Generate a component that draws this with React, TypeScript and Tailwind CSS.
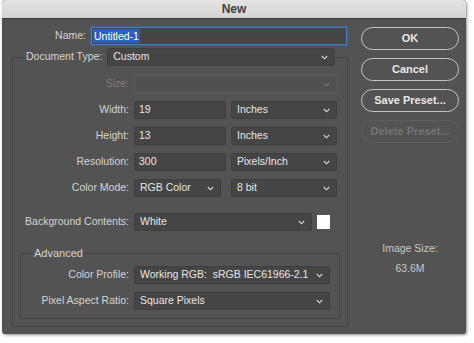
import React from 'react'

function Chevron({dim}: {dim?: boolean}) {
    return (
        <svg width="7" height="5" viewBox="0 0 7 5" className="shrink-0">
            <polyline points="0.8,1 3.5,3.8 6.2,1" fill="none" stroke={dim ? '#777777' : '#d8d8d8'} strokeWidth="1.1" />
        </svg>
    )
}

function Select({value, w, disabled}: {value: string; w: string; disabled?: boolean}) {
    return (
        <div className={`${w} h-[18px] flex items-center justify-between pl-[5px] pr-[6px] rounded-[2px] border ${disabled ? 'border-[#5c5c5c] bg-[#505050]' : 'border-[#3f3f3f] bg-[#454545]'}`}>
            <span className="text-[#e6e6e6] truncate whitespace-pre">{value}</span>
            <Chevron dim={disabled} />
        </div>
    )
}

function Input({value, w}: {value: string; w: string}) {
    return (
        <div className={`${w} h-[18px] flex items-center pl-[4px] rounded-[2px] border border-[#3f3f3f] bg-[#454545] text-[#e6e6e6]`}>
            {value}
        </div>
    )
}

function Button({label, disabled}: {label: string; disabled?: boolean}) {
    return (
        <div className={`w-[98px] h-[23px] rounded-full border flex items-center justify-center text-[11px] font-semibold ${disabled ? 'border-[#5e5e5e] text-[#757575]' : 'border-[#c4c4c4] text-[#e8e8e8]'}`}>
            {label}
        </div>
    )
}

function Row({label, labelW, children, dim}: {label: string; labelW: string; children: React.ReactNode; dim?: boolean}) {
    return (
        <div className="flex items-center gap-[5px] h-[18px]">
            <div className={`${labelW} text-right ${dim ? 'text-[#7c7c7c]' : 'text-[#d4d4d4]'}`}>{label}</div>
            {children}
        </div>
    )
}

export default function App() {
    return (
        <div className="w-[474px] h-[343px] bg-white text-[10.5px]" style={{fontFamily: '"Liberation Sans", Arial, sans-serif'}}>
            <div className="ml-[2px] w-[464px] h-[334px] bg-[#535353] rounded-t-[4px] rounded-b-[3px] overflow-hidden shadow-[1px_1px_3px_rgba(0,0,0,0.45)]">
                <div className="h-[19px] bg-gradient-to-b from-[#e4e4e4] to-[#d4d4d4] border-b border-[#3a3a3a] flex items-center justify-center">
                    <span className="text-[12px] font-bold text-[#404040]">New</span>
                </div>
                <div className="flex">
                    <div className="w-[348px] pt-[8px]">
                        <div className="flex items-center gap-[5px] h-[18px]">
                            <div className="w-[84px] text-right text-[#d4d4d4]">Name:</div>
                            <div className="w-[256px] h-[18px] flex items-center pl-[1px] border border-[#4a7fc4] shadow-[0_0_0_1px_#3a5f8f] bg-[#454545]">
                                <span className="bg-[#2a5fc0] text-white px-[1px] leading-[14px]">Untitled-1</span>
                            </div>
                        </div>
                        <div className="mt-[12px] ml-[10px] w-[336px] border border-[#454545] pb-[7px]">
                            <div className="-mt-[10px] ml-[11px] flex items-center h-[18px]">
                                <div className="bg-[#535353] pl-[2px] pr-[5px] text-[#d4d4d4]">Document Type:</div>
                                <Select value="Custom" w="w-[228px]" />
                            </div>
                            <div className="mt-[9px] flex flex-col gap-[8px]">
                                <Row label="Size:" labelW="w-[116px]" dim>
                                    <Select value="" w="w-[203px]" disabled />
                                </Row>
                                <Row label="Width:" labelW="w-[116px]">
                                    <Input value="19" w="w-[92px]" />
                                    <Select value="Inches" w="w-[106px]" />
                                </Row>
                                <Row label="Height:" labelW="w-[116px]">
                                    <Input value="13" w="w-[92px]" />
                                    <Select value="Inches" w="w-[106px]" />
                                </Row>
                                <Row label="Resolution:" labelW="w-[116px]">
                                    <Input value="300" w="w-[92px]" />
                                    <Select value="Pixels/Inch" w="w-[106px]" />
                                </Row>
                                <Row label="Color Mode:" labelW="w-[116px]">
                                    <Select value="RGB Color" w="w-[87px]" />
                                    <div className="w-0" />
                                    <Select value="8 bit" w="w-[106px]" />
                                </Row>
                            </div>
                            <div className="mt-[16px]">
                                <Row label="Background Contents:" labelW="w-[116px]">
                                    <Select value="White" w="w-[178px]" />
                                    <div className="w-[13px] h-[14px] bg-white" />
                                </Row>
                            </div>
                            <div className="mt-[22px] ml-[7px] w-[320px] border border-[#454545] pb-[8px]">
                                <div className="-mt-[8px] ml-[12px] w-fit px-[1px] leading-[14px] bg-[#535353] text-[#d4d4d4] text-[11px]">Advanced</div>
                                <div className="mt-[6px] flex flex-col gap-[8px]">
                                    <Row label="Color Profile:" labelW="w-[108px]">
                                        <Select value="Working RGB:  sRGB IEC61966-2.1" w="w-[196px]" />
                                    </Row>
                                    <Row label="Pixel Aspect Ratio:" labelW="w-[108px]">
                                        <Select value="Square Pixels" w="w-[196px]" />
                                    </Row>
                                </div>
                            </div>
                        </div>
                    </div>
                    <div className="w-[116px] pt-[8px] pl-[11px] flex flex-col">
                        <div className="flex flex-col gap-[8px]">
                            <Button label="OK" />
                            <Button label="Cancel" />
                            <Button label="Save Preset..." />
                            <Button label="Delete Preset..." disabled />
                        </div>
                        <div className="w-[98px] mt-[98px] text-center text-[#c8c8c8] leading-[14px]">Image Size:</div>
                        <div className="w-[98px] mt-[6px] text-center text-[#c8c8c8] leading-[14px]">63.6M</div>
                    </div>
                </div>
            </div>
        </div>
    )
}
